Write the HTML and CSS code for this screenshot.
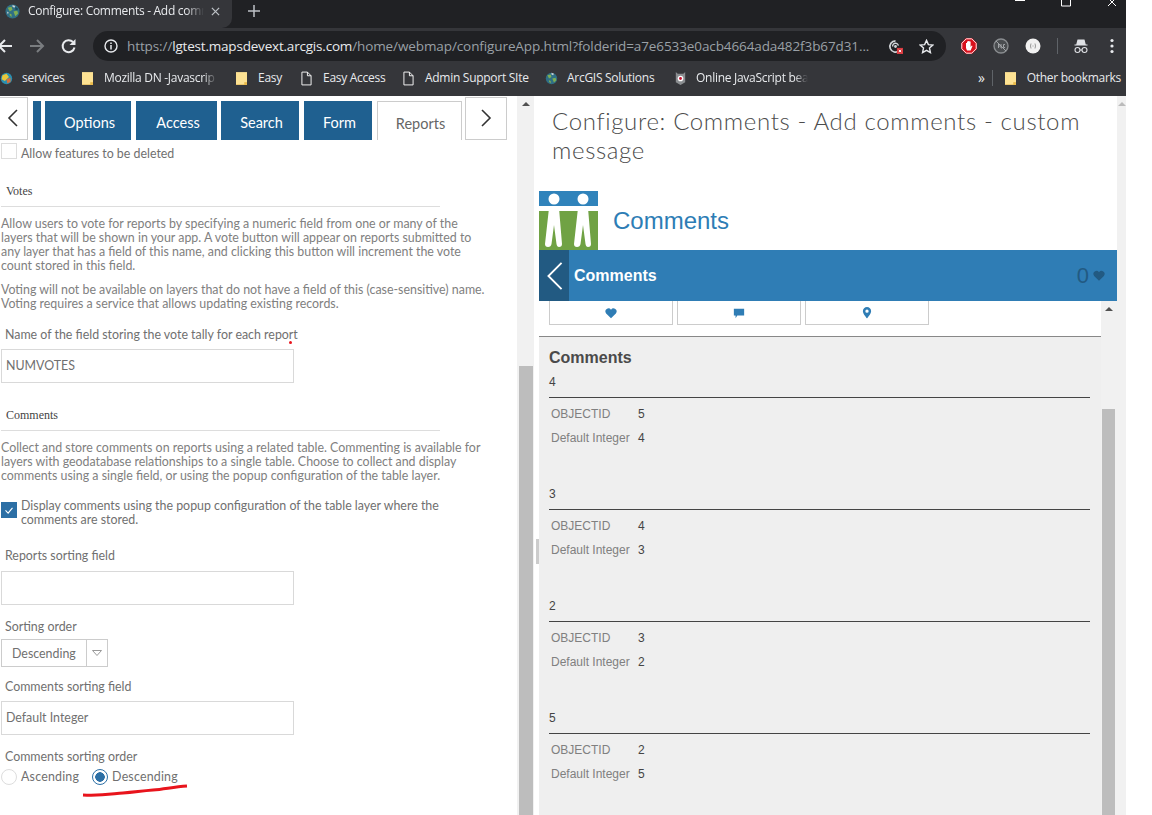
FILE: index.html
```html
<!DOCTYPE html>
<html lang="en">
<head>
<meta charset="utf-8">
<title>Configure: Comments</title>
<link rel="stylesheet" href="styles.css">
</head>
<body>
<div class="browser">
  <div class="tabstrip">
    <div class="tab">
      <svg class="fav" viewBox="0 0 16 16"><circle cx="8" cy="8" r="7.500" fill="#2f6f86"/><path d="M3 4l4-1 1 3-3 2zM9 8l4-1 1 3-3 3zM5 10l2 1v3l-2-2z" fill="#7fae52"/><path d="M8 1l3 1-1 2-2-1zM2 8l2 1-1 2z" fill="#cfd4d6"/><path d="M11 3l3 2-1 2-2-1z" fill="#1d4a5c"/></svg>
      <span class="tabtitle">Configure: Comments - Add comments</span>
      <svg class="tabx" viewBox="0 0 10 10"><path d="M1 1l8 8M9 1l-8 8" stroke="#bdc1c6" stroke-width="1.400"/></svg>
    </div>
    <svg class="newtab" viewBox="0 0 12 12"><path d="M6 0v12M0 6h12" stroke="#bdc1c6" stroke-width="1.500"/></svg>
    <div class="winctl">
      <svg viewBox="0 0 12 12"><path d="M1 0h10" stroke="#fff" stroke-width="2"/></svg>
      <svg viewBox="0 0 12 12"><path d="M1.500 -2h9v8h-9z" stroke="#fff" fill="none"/></svg>
      <svg viewBox="0 0 12 12"><path d="M1 -3l9 9M11 -3l-9 9" stroke="#fff" fill="none"/></svg>
    </div>
  </div>
  <div class="toolbar">
    <svg class="nav nav-back" viewBox="0 0 16 16"><path d="M15 8H2M8 2L2 8l6 6" stroke="#e8eaed" stroke-width="2" fill="none"/></svg>
    <svg class="nav" viewBox="0 0 16 16"><path d="M1 8h13M8 2l6 6-6 6" stroke="#7a7d80" stroke-width="2" fill="none"/></svg>
    <svg class="nav" viewBox="0 0 16 16"><path d="M13.500 9.500A6 6 0 1 1 12 4" stroke="#e8eaed" stroke-width="2" fill="none"/><path d="M14.500 1v6h-6z" fill="#e8eaed"/></svg>
    <div class="omnibox">
      <svg class="info" viewBox="0 0 14 14"><circle cx="7" cy="7" r="6" stroke="#e8eaed" stroke-width="1.400" fill="none"/><path d="M7 6v4.500M7 3.500v1.500" stroke="#e8eaed" stroke-width="1.500"/></svg>
      <span class="url"><span class="dim">https://</span><span class="host">lgtest.mapsdevext.arcgis.com</span><span class="dim">/home/webmap/configureApp.html?folderid=a7e6533e0acb4664ada482f3b67d31...</span></span>
      <svg class="omni-ic" viewBox="0 0 16 16"><path d="M8 2a6 6 0 1 0 4 10.500" stroke="#d0d3d6" stroke-width="1.800" fill="none"/><path d="M5 8a3 3 0 0 1 6-1" stroke="#d0d3d6" stroke-width="1.500" fill="none"/><circle cx="8" cy="8" r="1.500" fill="#d0d3d6"/><rect x="9.500" y="9.500" width="6.500" height="6.500" fill="#d93a3f"/><path d="M11.500 11.500l2.500 2.500M14 11.500L11.500 14" stroke="#fff"/></svg>
      <svg class="omni-ic star" viewBox="0 0 16 16"><path d="M8 1.500l2 4.500 4.800.5-3.600 3.200 1 4.800L8 12.100l-4.200 2.400 1-4.800L1.200 6.500 6 6z" stroke="#e8eaed" stroke-width="1.500" fill="none"/></svg>
    </div>
    <div class="exts">
      <svg class="ext" viewBox="0 0 16 16"><path d="M5 0h6l5 5v6l-5 5H5l-5-5V5z" fill="#d9101c"/><path d="M5.300.8h5.400l4.500 4.500v5.400l-4.500 4.500H5.300L.8 10.700V5.300z" fill="none" stroke="#fff" stroke-width=".9"/><path d="M5 7.500V5h1v2-3.500h1.200V7V3h1.200v4V3.500h1.200V9l1.200-1.500.7.500-1.900 4.500H6L5 10z" fill="#fff"/></svg>
      <svg class="ext" viewBox="0 0 16 16"><circle cx="8" cy="8" r="7" stroke="#8a8d90" stroke-width="1.300" fill="#4a4d50"/><path d="M3 3l10 10M5.500 6v4M5.500 8h2M8 6v4h1M12 6.500h-1.500v3H12" stroke="#a0a3a6" fill="none"/></svg>
      <svg class="ext" viewBox="0 0 16 16"><circle cx="8" cy="8" r="7.500" fill="#f1f1f1"/><path d="M6 5.500Q5 8 6 10.500M10 5.500q1 2.500 0 5M7.500 8h1" stroke="#999" fill="none"/></svg>
      <span class="tbsep"></span>
      <svg class="ext" viewBox="0 0 16 16"><path d="M1.500 7h13M4 6l1-4h6l1 4z" stroke="#dfe1e5" stroke-width="1.200" fill="#dfe1e5"/><circle cx="4.500" cy="12" r="2.500" stroke="#dfe1e5" stroke-width="1.100" fill="none"/><circle cx="11.500" cy="12" r="2.500" stroke="#dfe1e5" stroke-width="1.100" fill="none"/><path d="M7 12h2" stroke="#dfe1e5"/></svg>
      <svg class="kebab" viewBox="0 0 4 16"><circle cx="2" cy="2.500" r="1.600" fill="#e8eaed"/><circle cx="2" cy="8" r="1.600" fill="#e8eaed"/><circle cx="2" cy="13.500" r="1.600" fill="#e8eaed"/></svg>
    </div>
  </div>
  <div class="bookmarks">
    <span class="bm bm-services"><svg class="bi" viewBox="0 0 16 16"><circle cx="8" cy="8" r="7" fill="#2a8fb0"/><path d="M3 4l5-2 3 4-5 5-4-2z" fill="#e8c63a"/><path d="M8 9l5-2v5l-4 2z" fill="#d8703a"/></svg>services</span>
    <span class="bm bm-moz"><svg class="bi folder" viewBox="0 0 12 16"><path d="M0 1h12v14H0z" fill="#fde293"/><path d="M9 12h3v3H9z" fill="#e9b949"/><path d="M0 14.500h12V15H0z" fill="#e9b949"/></svg><span class="bt bt-moz">Mozilla DN -Javascrip</span></span>
    <span class="bm bm-easy"><svg class="bi folder" viewBox="0 0 12 16"><path d="M0 1h12v14H0z" fill="#fde293"/><path d="M9 12h3v3H9z" fill="#e9b949"/><path d="M0 14.500h12V15H0z" fill="#e9b949"/></svg>Easy</span>
    <span class="bm bm-access"><svg class="bi pageic" viewBox="0 0 12 16"><path d="M1 1h6l4 4v10H1zM7 1v4h4" stroke="#fff" fill="none"/></svg>Easy Access</span>
    <span class="bm bm-admin"><svg class="bi pageic" viewBox="0 0 12 16"><path d="M1 1h6l4 4v10H1zM7 1v4h4" stroke="#fff" fill="none"/></svg>Admin Support SIte</span>
    <span class="bm bm-arcgis"><svg class="bi" viewBox="0 0 16 16"><circle cx="8" cy="8" r="7" fill="#2f6f86"/><path d="M3 4l4-1 1 3-3 2zM9 8l4-1 1 3-3 3zM5 10l2 1v3l-2-2z" fill="#7fae52"/><path d="M8 1l3 1-1 2-2-1z" fill="#cfd4d6"/></svg>ArcGIS Solutions</span>
    <span class="bm bm-online"><svg class="bi" viewBox="0 0 12 16"><path d="M1 1l2 2h6l2-2v11l-5 3-5-3z" fill="#8a8d90"/><circle cx="6" cy="8" r="3" fill="#fff"/><circle cx="6" cy="8" r="1.500" fill="#c8102e"/></svg><span class="bt bt-online">Online JavaScript bea</span></span>
    <span class="bm-more">&raquo;</span>
    <span class="bmsep"></span>
    <span class="bm"><svg class="bi folder" viewBox="0 0 12 16"><path d="M0 1h12v14H0z" fill="#fde293"/><path d="M9 12h3v3H9z" fill="#e9b949"/><path d="M0 14.500h12V15H0z" fill="#e9b949"/></svg>Other bookmarks</span>
  </div>
  <div class="page">
    <div class="leftpane">
      <div class="tabsrow">
        <div class="tabarrow tabarrow-l"><svg viewBox="0 0 12 20"><path d="M10 2L2 10l8 8" stroke="#333" stroke-width="1.600" fill="none"/></svg></div>
        <div class="cfgtab cfgtab-cut"></div>
        <div class="cfgtab cfgtab-options">Options</div>
        <div class="cfgtab cfgtab-access">Access</div>
        <div class="cfgtab cfgtab-search">Search</div>
        <div class="cfgtab cfgtab-form">Form</div>
        <div class="cfgtab cfgtab-reports">Reports</div>
        <div class="tabarrow tabarrow-r"><svg viewBox="0 0 12 20"><path d="M2 2l8 8-8 8" stroke="#333" stroke-width="1.600" fill="none"/></svg></div>
      </div>
      <div class="form">
        <label class="check check-first"><span class="box"></span><span class="check-text">Allow features to be deleted</span></label>
        <h4 class="sect sect-votes">Votes</h4>
        <p class="desc">Allow users to vote for reports by specifying a numeric field from one or many of the layers that will be shown in your app. A vote button will appear on reports submitted to any layer that has a field of this name, and clicking this button will increment the vote count stored in this field.</p>
        <p class="desc desc-2">Voting will not be available on layers that do not have a field of this (case-sensitive) name. Voting requires a service that allows updating existing records.</p>
        <div class="lbl lbl-name">Name of the field storing the vote tally for each report<span class="reddot"></span></div>
        <div class="input">NUMVOTES</div>
        <h4 class="sect sect-comments">Comments</h4>
        <p class="desc">Collect and store comments on reports using a related table. Commenting is available for layers with geodatabase relationships to a single table. Choose to collect and display comments using a single field, or using the popup configuration of the table layer.</p>
        <label class="check check-popup"><span class="box box-on"><svg viewBox="0 0 16 16"><path d="M4 8.500l3 3 5-6" stroke="#fff" stroke-width="1.300" fill="none"/></svg></span><span class="popup-text">Display comments using the popup configuration of the table layer where the comments are stored.</span></label>
        <div class="lbl lbl-reports">Reports sorting field</div>
        <div class="input"></div>
        <div class="lbl lbl-order">Sorting order</div>
        <div class="select"><span class="selval">Descending</span><span class="selbtn"><svg viewBox="0 0 10 6"><path d="M.5.5h9L5 5.500z" fill="none" stroke="#999"/></svg></span></div>
        <div class="lbl lbl-csort">Comments sorting field</div>
        <div class="input">Default Integer</div>
        <div class="lbl lbl-corder">Comments sorting order</div>
        <div class="radios">
          <span class="radio"></span><span class="rlabel rlabel-a">Ascending</span>
          <span class="radio radio-on"></span><span class="rlabel rlabel-d">Descending<svg class="scribble" viewBox="0 0 108 14"><path d="M2 11C20 12 30 10 42 9S60 7 72 6 92 3 106 2" stroke="#e8141c" stroke-width="3" fill="none"/></svg></span>
        </div>
      </div>
    </div>
    <div class="scrollbar scrollbar-left"><span class="sb-arrow"></span><span class="sb-thumb sb-thumb-left"></span></div>
    <div class="rightpane">
      <span class="grip"></span>
      <h1 class="cfgtitle">Configure: Comments - Add comments - custom message</h1>
      <div class="app">
        <div class="apphead">
          <svg class="logo" viewBox="0 0 59 59"><rect width="59" height="15" fill="#3083bb"/><rect y="20" width="59" height="39" fill="#70a244"/><rect y="15" width="59" height="5" fill="#fff"/><circle cx="15" cy="8" r="5.500" fill="#fff"/><circle cx="44" cy="8" r="5.500" fill="#fff"/><path d="M10 17H20L23 53Q23 56 20 56 18 56 17.500 53L15 34 12.500 53Q12 56 9 56 6 56 6 53Z" fill="#fff"/><path d="M39 17H49L52 53Q52 56 49 56 47 56 46.500 53L44 34 41.500 53Q41 56 38 56 35 56 35 53Z" fill="#fff"/></svg>
          <span class="apptitle">Comments</span>
        </div>
        <div class="appbar">
          <span class="appback"><svg viewBox="0 0 18 32"><path d="M16 2L2 16l14 14" stroke="#fff" stroke-width="2" fill="none"/></svg></span>
          <span class="appbar-title">Comments</span>
          <span class="votes">0<svg viewBox="0 0 16 14"><path d="M8 14L1.500 7.500a3.800 3.800 0 0 1 6.500-5 3.800 3.800 0 0 1 6.500 5z" fill="#225a82"/></svg></span>
        </div>
        <div class="appbody">
          <div class="appscroll">
            <div class="actions">
              <span class="action"><svg viewBox="0 0 16 14"><path d="M8 14L1.500 7.500a3.800 3.800 0 0 1 6.500-5 3.800 3.800 0 0 1 6.500 5z" fill="#2f7db5"/></svg></span>
              <span class="action"><svg viewBox="0 0 14 14"><path d="M1 2h12v8H5l-2 3v-3H1z" fill="#2f7db5"/></svg></span>
              <span class="action"><svg viewBox="0 0 12 16"><path fill-rule="evenodd" d="M6 0a5.500 5.500 0 0 1 5.500 5.500C11.500 9 6 15 6 15S.5 9 .5 5.500A5.500 5.500 0 0 1 6 0zm0 3.300a2.200 2.200 0 1 0 0 4.400 2.200 2.200 0 0 0 0-4.400z" fill="#2f7db5"/></svg></span>
            </div>
            <div class="comments">
              <h3 class="cm-head">Comments</h3>
              <div class="cm">
                <div class="cm-title">4</div>
                <div class="cm-row"><span class="cm-k">OBJECTID</span><span class="cm-v">5</span></div>
                <div class="cm-row"><span class="cm-k">Default Integer</span><span class="cm-v">4</span></div>
              </div>
              <div class="cm">
                <div class="cm-title">3</div>
                <div class="cm-row"><span class="cm-k">OBJECTID</span><span class="cm-v">4</span></div>
                <div class="cm-row"><span class="cm-k">Default Integer</span><span class="cm-v">3</span></div>
              </div>
              <div class="cm">
                <div class="cm-title">2</div>
                <div class="cm-row"><span class="cm-k">OBJECTID</span><span class="cm-v">3</span></div>
                <div class="cm-row"><span class="cm-k">Default Integer</span><span class="cm-v">2</span></div>
              </div>
              <div class="cm">
                <div class="cm-title">5</div>
                <div class="cm-row"><span class="cm-k">OBJECTID</span><span class="cm-v">2</span></div>
                <div class="cm-row"><span class="cm-k">Default Integer</span><span class="cm-v">5</span></div>
              </div>
            </div>
          </div>
          <div class="scrollbar scrollbar-app"><span class="sb-arrow"></span><span class="sb-thumb sb-thumb-app"></span></div>
        </div>
      </div>
    </div>
    <div class="scrollbar scrollbar-right"><span class="sb-arrow sb-arrow-light"></span></div>
  </div>
</div>
</body>
</html>
```

FILE: styles.css
```css
* { box-sizing: border-box; }
html, body { margin: 0; height: 815px; overflow: hidden; background: #fff; }
body { font-family: "Lato", "Liberation Sans", sans-serif; }
.browser { width: 1126px; height: 815px; display: flex; flex-direction: column; }

/* window chrome */
.tabstrip { height: 28px; flex: none; background: #202124; display: flex; align-items: center; position: relative; overflow: hidden; }
.tab { width: 232px; height: 28px; background: #35363a; border-radius: 0 0 10px 0; display: flex; align-items: center; padding: 0 0 6px 5px; flex: none; }
.fav { width: 15px; height: 15px; flex: none; }
.tabtitle { width: 176px; margin-left: 8px; white-space: nowrap; overflow: hidden; color: #e8eaed; font: 12px/16px "Open Sans", sans-serif; letter-spacing: -.3px;
  -webkit-mask-image: linear-gradient(to right, #000 90%, transparent); mask-image: linear-gradient(to right, #000 90%, transparent); }
.tabx { width: 9px; height: 9px; margin-left: 7px; flex: none; }
.newtab { width: 12px; height: 12px; margin: 0 0 6px 16px; flex: none; }
.winctl { margin-left: auto; display: flex; gap: 34px; padding-right: 8px; align-self: flex-start; }
.winctl svg { width: 12px; height: 12px; overflow: visible; display: block; }

.toolbar { height: 36px; flex: none; background: #35363a; display: flex; align-items: center; }
.nav { width: 16px; height: 16px; margin-right: 16px; flex: none; }
.nav-back { margin-left: -3px; }
.omnibox { width: 853px; height: 30px; background: #202124; border-radius: 15px; display: flex; align-items: center; padding-left: 11px; }
.info { width: 14px; height: 14px; flex: none; }
.url { margin-left: 9px; width: 744px; white-space: nowrap; overflow: hidden; font: 13.500px "Open Sans", sans-serif; letter-spacing: -.2px; flex: none; }
.dim { color: #9aa0a6; letter-spacing: -.1px; }
.host { color: #e8eaed; }
.omni-ic { width: 15px; height: 15px; margin-left: 17px; flex: none; }
.star { margin-left: 16px; }
.exts { display: flex; align-items: center; margin-left: 15px; }
.ext { width: 16px; height: 16px; margin-right: 16px; flex: none; }
.tbsep { width: 1px; height: 16px; background: #5f6368; margin: 0 15px 0 0; }
.kebab { width: 4px; height: 16px; margin-left: 5px; }

.bookmarks { height: 32px; flex: none; background: #35363a; display: flex; align-items: center; color: #e8eaed; font: 12px/16px "Open Sans", sans-serif; letter-spacing: -.28px; white-space: nowrap; padding-bottom: 4px; }
.bm { display: flex; align-items: center; }
.bi { width: 13px; height: 15px; margin-right: 9px; flex: none; }
.folder, .pageic { width: 11px; margin-right: 11px; }
.bm-services { width: 63px; }
.bm-moz { margin-left: 19px; width: 135px; }
.bm-easy { margin-left: 19px; width: 46px; }
.bm-access { margin-left: 19px; width: 83px; }
.bm-admin { margin-left: 19px; width: 125px; }
.bm-arcgis { margin-left: 17px; width: 111px; }
.bm-online { margin-left: 18px; width: 134px; }
.bt { overflow: hidden; -webkit-mask-image: linear-gradient(to right, #000 88%, transparent); mask-image: linear-gradient(to right, #000 88%, transparent); }
.bt-moz { width: 113px; }
.bt-online { width: 112px; }
.bm-more { margin-left: 170px; font-size: 14px; }
.bmsep { width: 1px; height: 16px; background: #5f6368; margin: 0 12px 0 7px; }

/* page */
.page { flex: 1; min-height: 0; display: flex; background: #fff; overflow: hidden; }
.leftpane { width: 517px; flex: none; overflow: hidden; }
.tabsrow { height: 44px; display: flex; align-items: flex-end; }
.tabarrow { height: 43px; background: #fff; border: 1px solid #ccc; display: flex; align-items: center; justify-content: center; flex: none; }
.tabarrow svg { width: 12px; height: 20px; }
.tabarrow-l { width: 29px; margin-left: -1px; border-left: 0; padding-bottom: 2px; }
.tabarrow-r { width: 42px; margin-left: 3px; padding-bottom: 2px; }
.cfgtab { height: 39px; background: #1f6090; color: #fff; font-size: 14.500px; display: flex; align-items: center; justify-content: center; padding: 4px 0 0 3px; flex: none; }
.cfgtab-cut { width: 8px; margin-left: 5px; }
.cfgtab-options { width: 86px; margin-left: 4px; }
.cfgtab-access { width: 81px; margin-left: 5px; }
.cfgtab-search { width: 78px; margin-left: 4px; }
.cfgtab-form { width: 68px; margin-left: 5px; }
.cfgtab-reports { width: 85px; margin-left: 5px; background: #fff; color: #666; border: 1px solid #ccc; border-bottom: 0; padding-left: 2px; }

.form { padding-left: 1px; color: #808080; font-size: 12.400px; line-height: 14px; }
.check { display: flex; gap: 4px; align-items: flex-start; }
.check-first { margin-top: 3px; height: 17px; color: #707070; }
.check-text { margin-top: 4px; }
.box { width: 16px; height: 16px; border: 1px solid #ddd; flex: none; display: block; }
.box-on { background: #2c6fa5; border-color: #2c6fa5; margin-top: 3px; }
.box-on svg { width: 14px; height: 14px; display: block; }
.sect { margin: 0; width: 439px; font: 12px/14px "Liberation Serif", serif; color: #444; padding: 0 0 8px 5px; border-bottom: 1px solid #ddd; }
.sect-votes { margin-top: 24px; }
.sect-comments { margin-top: 25px; }
.desc { margin: 10px 0 0; width: 490px; }
.desc-2 { margin-top: 10px; }
.lbl { padding: 1px 0 0 4px; color: #707070; }
.lbl-name { margin-top: 16px; margin-bottom: 7px; position: relative; width: 300px; }
.reddot { position: absolute; left: 288px; top: 14px; width: 3px; height: 3px; border-radius: 50%; background: #e8141c; }
.input { width: 293px; height: 34px; border: 1px solid #d9d9d9; padding: 0 4px; display: flex; align-items: center; color: #707070; }
.check-popup { margin-top: 16px; color: #707070; }
.popup-text { width: 450px; }
.lbl-reports { margin-top: 21px; margin-bottom: 8px; }
.lbl-order { margin-top: 14px; margin-bottom: 5px; }
.select { width: 107px; height: 28px; border: 1px solid #ccc; display: flex; align-items: center; color: #707070; }
.selval { width: 84px; padding: 2px 0 0 10px; }
.selbtn { flex: 1; height: 100%; border-left: 1px solid #ccc; display: flex; align-items: center; justify-content: center; }
.selbtn svg { width: 10px; height: 6px; }
.lbl-csort { margin-top: 12px; margin-bottom: 7px; }
.lbl-corder { margin-top: 14px; }
.radios { display: flex; align-items: center; margin-top: 5px; height: 16px; }
.radio { width: 16px; height: 16px; border-radius: 50%; border: 1px solid #ddd; flex: none; }
.radio-on { border-color: #2c6fa5; position: relative; margin-left: 13px; background: radial-gradient(circle, #2c6fa5 0 4.500px, #fff 5px); }
.rlabel { margin-left: 4px; color: #707070; letter-spacing: .2px; }
.rlabel-d { position: relative; }
.scribble { position: absolute; left: -31px; top: 14px; width: 108px; height: 14px; }

/* scrollbars */
.scrollbar { background: #f1f1f1; flex: none; position: relative; display: flex; flex-direction: column; }
.sb-arrow { width: 0; height: 0; border: 4px solid transparent; border-top: 0; border-bottom: 4px solid #505050; position: absolute; top: 6px; left: 50%; margin-left: -4px; }
.sb-arrow-light { border-bottom-color: #bbb; }
.scrollbar-left { width: 17px; }
.sb-thumb { background: #bdbdbd; display: block; }
.sb-thumb-left { position: absolute; left: 2px; right: 1px; top: 270px; bottom: 0; }
.scrollbar-right { width: 9px; margin-left: auto; }
.scrollbar-app { width: 16px; background: #f1f1f1; }
.sb-thumb-app { position: absolute; left: 1px; right: 2px; top: 108px; bottom: 0; }

/* right pane */
.rightpane { width: 583px; flex: none; padding-left: 5px; position: relative; display: flex; flex-direction: column; min-height: 0; }
.grip { position: absolute; left: 2px; top: 443px; width: 3px; height: 25px; background: #ccc; }
.cfgtitle { margin: 10px 0 0 13px; width: 545px; font-weight: 300; font-size: 24px; line-height: 29px; color: #4c4c4c; letter-spacing: .65px; }
.app { flex: 1; min-height: 0; margin-top: 27px; display: flex; flex-direction: column; font-family: "Liberation Sans", sans-serif; }
.apphead { height: 59px; flex: none; display: flex; align-items: center; }
.logo { width: 59px; height: 59px; flex: none; }
.apptitle { margin-left: 15px; font-size: 24px; color: #2d7db5; }
.appbar { height: 51px; flex: none; background: #2f7db5; display: flex; align-items: center; }
.appback { width: 30px; height: 51px; background: #225a82; display: flex; align-items: center; justify-content: center; }
.appback svg { width: 18px; height: 30px; margin-left: 2px; }
.appbar-title { margin-left: 5px; color: #fff; font-weight: 700; font-size: 16px; }
.votes { margin-left: auto; padding-right: 12px; display: flex; align-items: center; color: #225a82; font-size: 22px; gap: 4px; }
.votes svg { width: 12px; height: 11px; }
.appbody { flex: 1; min-height: 0; display: flex; }
.appscroll { flex: 1; min-width: 0; overflow: hidden; }
.actions { height: 36px; padding-left: 10px; display: flex; gap: 4px; align-items: flex-start; border-bottom: 1px solid #888; }
.action { width: 124px; height: 24px; border: 1px solid #ccc; border-top: 0; display: flex; align-items: center; justify-content: center; }
.action svg { width: 12px; height: 12px; }
.comments { background: #efefef; padding: 12px 10px 0; height: 500px; color: #444; }
.cm-head { margin: 0 0 8px; font-size: 16px; line-height: 18px; font-weight: 700; color: #4a4a4a; }
.cm { height: 112px; }
.cm-title { font-size: 12px; line-height: 14px; padding-bottom: 8px; border-bottom: 1px solid #444; width: 541px; }
.cm-row { display: flex; height: 24px; align-items: center; font-size: 12px; padding-left: 2px; }
.cm-title + .cm-row { margin-top: 4px; }
.cm-k { width: 87px; color: #808080; }
```
